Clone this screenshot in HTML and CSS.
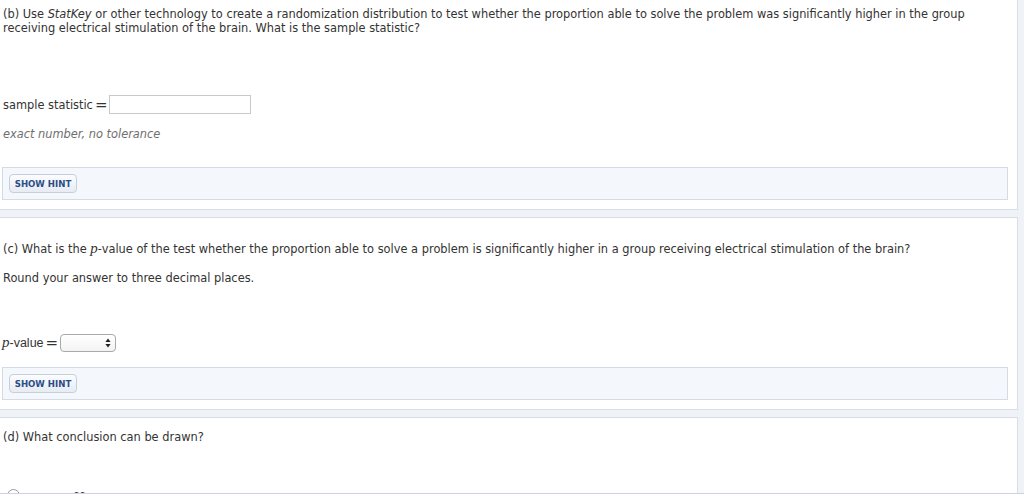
FILE: index.html
```html
<!DOCTYPE html>
<html lang="en">
<head>
<meta charset="utf-8">
<title>Randomization test</title>
<link rel="stylesheet" href="styles.css">
</head>
<body>
<div class="page">
  <section class="panel panel-b">
    <p class="q">(b) Use <i>StatKey</i> or other technology to create a randomization distribution to test whether the proportion able to solve the problem was significantly higher in the group receiving electrical stimulation of the brain. What is the sample statistic?</p>
    <div class="answer-row">
      <span class="label">sample statistic</span><span class="eq">=</span><span class="text-input"></span>
    </div>
    <p class="note">exact number, no tolerance</p>
    <div class="hint"><button class="hint-btn" type="button">SHOW HINT</button></div>
  </section>

  <section class="panel panel-c">
    <p class="q">(c) What is the <span class="mvar">p</span>-value of the test whether the proportion able to solve a problem is significantly higher in a group receiving electrical stimulation of the brain?</p>
    <p class="q round">Round your answer to three decimal places.</p>
    <div class="answer-row row-select">
      <span class="label"><span class="mvar mvar-lg">p</span><span class="sans">-value</span></span><span class="eq">=</span>
      <span class="select">
        <svg class="arrows" width="6" height="10" viewBox="0 0 6 10"><path d="M3 0.5 L5.6 4 L0.4 4 Z M3 9.5 L5.6 6 L0.4 6 Z" fill="#222"/></svg>
      </span>
    </div>
    <div class="hint"><button class="hint-btn" type="button">SHOW HINT</button></div>
  </section>

  <section class="panel panel-d">
    <p class="q">(d) What conclusion can be drawn?</p>
    <div class="option-row">
      <span class="radio"></span><span class="opt-text"><span class="mvar mvar-lg">H</span></span>
    </div>
  </section>
</div>
</body>
</html>
```

FILE: styles.css
```css
* { box-sizing: border-box; }

body {
  margin: 0;
  background: #ffffff;
  font-family: "DejaVu Sans", Verdana, sans-serif;
  font-size: 11.4px;
  line-height: 14px;
  color: #333333;
}

.page {
  height: 494px;
  overflow: hidden;
  background: #eff2f6;
  border-bottom: 1px solid #cdd4de;
}

.panel {
  width: 1018px;
  background: #ffffff;
  border: 1px solid #d7dee8;
  border-left: none;
  padding: 0 9px 9px 2px;
  margin-bottom: 7px;
}

.panel-b { border-top: none; padding-top: 7px; }
.panel-c { padding-top: 24px; }
.panel-d { padding-top: 12px; }

.q {
  margin: 0;
  padding-left: 1px;
}

.round { margin-top: 15px; }

.mvar {
  font-family: "Liberation Serif", "DejaVu Serif", serif;
  font-style: italic;
  font-size: 15px;
  line-height: 10px;
}

.answer-row {
  display: flex;
  align-items: center;
  height: 19px;
  margin-top: 60px;
  padding-left: 1px;
}

.row-select {
  margin-top: 48px;
  height: 19px;
  padding-left: 0;
}

.label { white-space: nowrap; }

.sans {
  font-family: "Liberation Sans", Arial, sans-serif;
  font-size: 12.5px;
}

.eq {
  font-family: "DejaVu Sans", sans-serif;
  font-size: 15px;
  line-height: 14px;
  margin: 0 2px 0 2px;
  color: #333;
}

.text-input {
  display: block;
  width: 142px;
  height: 19px;
  border: 1px solid #c9c9c9;
  background: #ffffff;
}

.select {
  display: flex;
  align-items: center;
  justify-content: flex-end;
  width: 56px;
  height: 18px;
  border: 1px solid #a9a9a9;
  border-radius: 4px;
  background: linear-gradient(#ffffff, #f3f3f3);
  padding-right: 4px;
}

.arrows { display: block; }

.note {
  margin: 13px 0 0;
  padding-left: 1px;
  font-style: italic;
  color: #6f6f6f;
}

.hint {
  margin-top: 26px;
  background: #f4f7fb;
  border: 1px solid #d3dbe7;
  padding: 6px;
}

.panel-c .hint { margin-top: 15px; }

.hint-btn {
  display: block;
  width: 68px;
  height: 19px;
  padding: 0;
  font-family: "DejaVu Sans", Verdana, sans-serif;
  font-weight: bold;
  font-size: 8.6px;
  color: #2d4d87;
  background: linear-gradient(#fbfcfe, #e7ecf3);
  border: 1px solid #c6d0dd;
  border-radius: 4px;
}

.option-row {
  display: flex;
  align-items: flex-start;
  margin-top: 45px;
  padding-left: 5px;
}

.radio {
  display: block;
  width: 13px;
  height: 13px;
  border: 1px solid #9a9a9a;
  border-radius: 50%;
  background: #fff;
}

.opt-text {
  margin-left: 53px;
  margin-top: 2px;
}
```
